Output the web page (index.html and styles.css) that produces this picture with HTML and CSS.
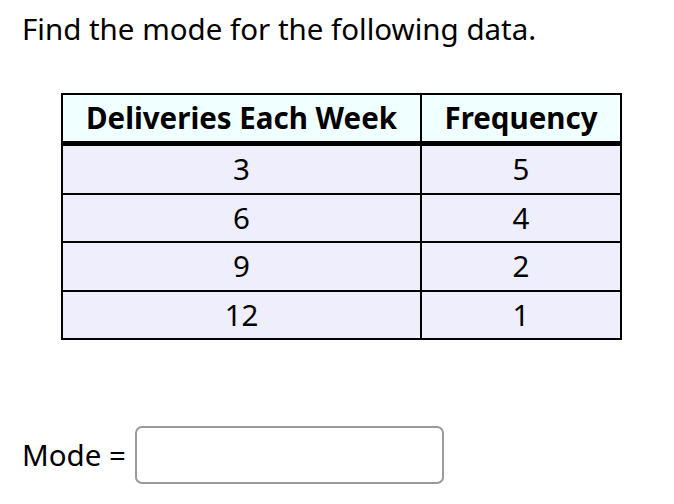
FILE: index.html
```html
<!DOCTYPE html>
<html>
<head>
<meta charset="utf-8">
<link rel="stylesheet" href="styles.css">
</head>
<body>
<div class="page">
  <p class="prompt">Find the mode for the following data.</p>
  <table class="data">
    <thead>
      <tr><th class="c1">Deliveries Each Week</th><th class="c2">Frequency</th></tr>
    </thead>
    <tbody>
      <tr><td>3</td><td>5</td></tr>
      <tr><td>6</td><td>4</td></tr>
      <tr><td>9</td><td>2</td></tr>
      <tr><td>12</td><td>1</td></tr>
    </tbody>
  </table>
  <div class="answer">
    <span class="label">Mode =</span>
    <span class="box"></span>
  </div>
</div>
</body>
</html>
```

FILE: styles.css
```css
html, body { margin: 0; padding: 0; background: #fff; }
.page {
  font-family: "Noto Sans", "Open Sans", sans-serif;
  color: #000;
  padding: 9px 0 0 22px;
}
.prompt {
  margin: 0;
  font-size: 29.5px;
  line-height: 40px;
}
.data {
  margin: 44px 0 0 39px;
  border-collapse: collapse;
  border: 2px solid #000;
}
.data th, .data td {
  border: 2px solid #000;
  text-align: center;
  padding: 0;
  line-height: 40px;
}
.data th {
  background: #f0ffff;
  font-weight: 700;
  font-size: 29.5px;
  height: 46px;
  border-bottom: 5px solid #000;
}
.data td {
  background: #eeeefc;
  font-size: 29.5px;
  height: 46.5px;
}
.data .c1 { width: 357px; }
.data .c2 { width: 198px; }
.answer {
  margin-top: 86px;
  display: flex;
  align-items: center;
  gap: 9px;
}
.label { font-size: 29.5px; line-height: 40px; }
.box {
  display: block;
  width: 305px;
  height: 54px;
  border: 2px solid #9a9a9a;
  border-radius: 7px;
}
```
